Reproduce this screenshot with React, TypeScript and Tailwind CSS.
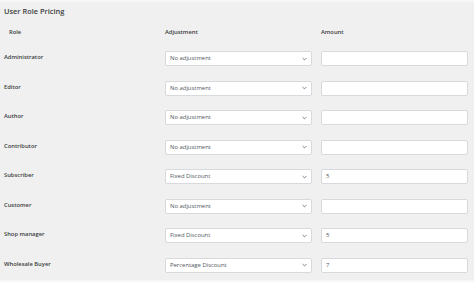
import React from "react";

const rows: { role: string; adj: string; amount: string }[] = [
  { role: "Administrator", adj: "No adjustment", amount: "" },
  { role: "Editor", adj: "No adjustment", amount: "" },
  { role: "Author", adj: "No adjustment", amount: "" },
  { role: "Contributor", adj: "No adjustment", amount: "" },
  { role: "Subscriber", adj: "Fixed Discount", amount: "5" },
  { role: "Customer", adj: "No adjustment", amount: "" },
  { role: "Shop manager", adj: "Fixed Discount", amount: "5" },
  { role: "Wholesale Buyer", adj: "Percentage Discount", amount: "7" },
];

function Chevron() {
  return (
    <svg width="5" height="4" viewBox="0 0 5 4" className="shrink-0">
      <path d="M0.6 1 L2.5 2.9 L4.4 1" fill="none" stroke="#707378" strokeWidth="0.9" />
    </svg>
  );
}

export default function App() {
  return (
    <div
      className="w-[474px] h-[282px] bg-[#f0f0f1] text-[#333538] overflow-hidden flex flex-col"
      style={{ fontFamily: '"Open Sans", "Noto Sans", sans-serif' }}
    >
      <div className="h-[2px] bg-[#f6f6f7]" />
      <div className="h-[19px] flex items-center pl-[4px] text-[7.4px] font-semibold text-[#3a3d40]">
        User Role Pricing
      </div>
      <div className="h-[23px] grid grid-cols-[165px_147px_9px_147px] items-center text-[5.8px] font-semibold text-[#3a3d40]">
        <div className="pl-[9px]">Role</div>
        <div>Adjustment</div>
        <div />
        <div>Amount</div>
      </div>
      {rows.map((r) => (
        <div
          key={r.role}
          className="h-[29.5px] grid grid-cols-[165px_147px_9px_147px] items-center"
        >
          <div className="pl-[4px] text-[5.8px] font-semibold text-[#3a3d40] -mt-[2px]">{r.role}</div>
          <div className="h-[15px] bg-white border border-[#d8d9dc] rounded-[2px] flex items-center justify-between pl-[4px] pr-[4px] text-[5.9px] text-[#50565c]">
            <span>{r.adj}</span>
            <Chevron />
          </div>
          <div />
          <div className="h-[15px] bg-white border border-[#d8d9dc] rounded-[2px] flex items-center pl-[4px] text-[5.9px] text-[#50565c]">
            {r.amount}
          </div>
        </div>
      ))}
      <div className="flex-1 bg-[#f6f6f7]" />
    </div>
  );
}
